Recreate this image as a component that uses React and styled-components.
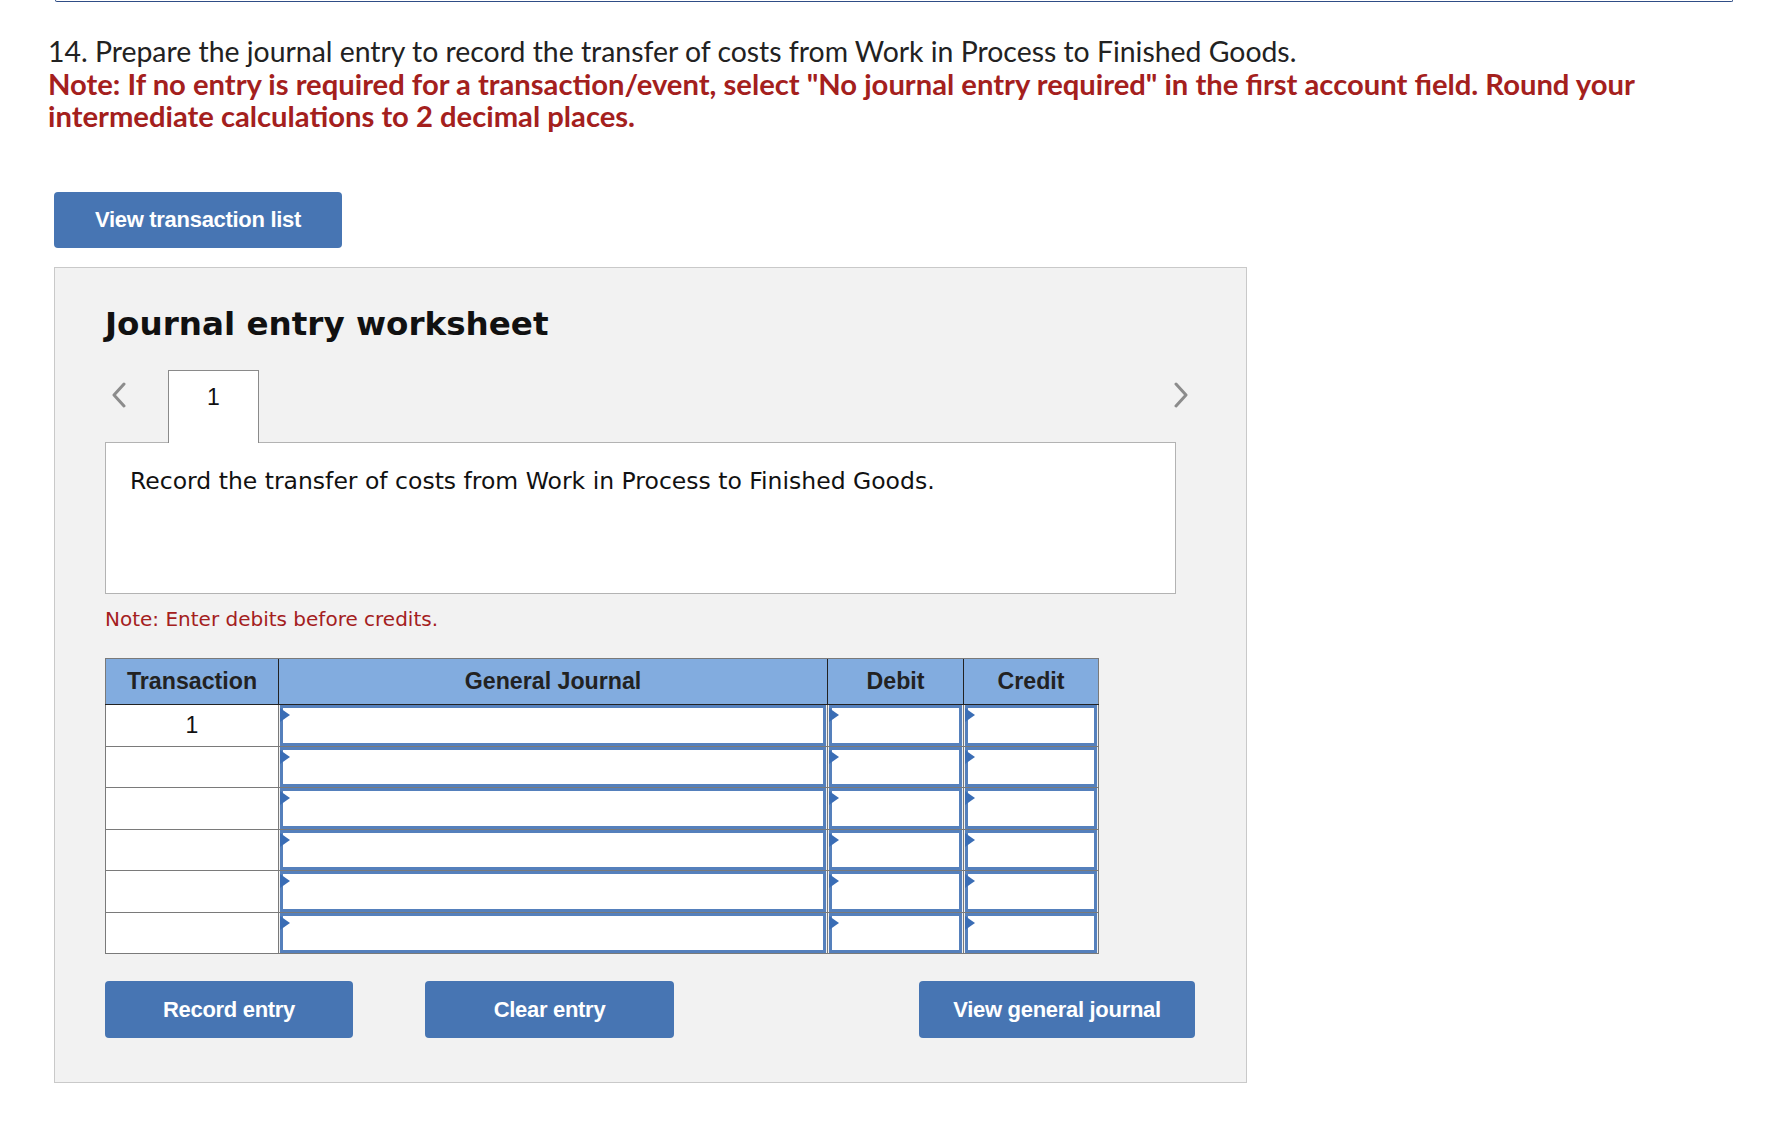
import React from "react";
import styled, { createGlobalStyle } from "styled-components";

const GlobalStyle = createGlobalStyle`
  html, body {
    margin: 0;
    padding: 0;
    background: #ffffff;
  }
`;

const Page = styled.div`
  width: 1790px;
  min-height: 1134px;
  background: #fff;
`;

const TopEdge = styled.div`
  margin: 0 57px 0 55px;
  height: 1px;
  border: 1px solid #2f4d86;
  border-top: none;
  border-radius: 0 0 4px 4px;
`;

const Question = styled.div`
  margin: 33px 0 0 48px;
  width: 1690px;
  font-family: Lato, "Open Sans", sans-serif;
  font-size: 28.4px;
  line-height: 33px;
  color: #222;

  p {
    margin: 0;
  }
`;

const RedNote = styled.p`
  color: #a4201d;
  font-weight: 700;
  font-size: 29.2px;
  line-height: 32px;
`;

const BlueButton = styled.button`
  display: flex;
  align-items: center;
  justify-content: center;
  width: ${(p) => p.$w}px;
  height: ${(p) => p.$h || 57}px;
  border: none;
  border-radius: 4px;
  background: #4775b3;
  color: #fff;
  font-family: "Liberation Sans", Arial, sans-serif;
  font-weight: 700;
  font-size: 22px;
  letter-spacing: -0.3px;
  cursor: pointer;
  padding: 0;
`;

const TopButtonWrap = styled.div`
  margin: 60px 0 0 54px;
`;

const Panel = styled.section`
  margin: 19px 0 0 54px;
  width: 1193px;
  box-sizing: border-box;
  background: #f2f2f2;
  border: 1px solid #c9c9c9;
  padding: 36px 51px 44px 50px;
  font-family: "DejaVu Sans", Verdana, sans-serif;
`;

const Title = styled.h2`
  margin: 0;
  font-size: 32.6px;
  line-height: 40px;
  font-weight: 700;
  color: #111;
`;

const TabRow = styled.div`
  margin-top: 26px;
  display: flex;
  align-items: flex-start;
  height: 72px;
`;

const Arrow = styled.button`
  display: flex;
  align-items: center;
  justify-content: center;
  width: 28px;
  height: 50px;
  border: none;
  background: none;
  padding: 0;
  margin: ${(p) => (p.$right ? "0 0 0 auto" : "0 35px 0 0")};
  cursor: pointer;
`;

const Tab = styled.div`
  position: relative;
  z-index: 1;
  align-self: stretch;
  width: 91px;
  box-sizing: border-box;
  margin-bottom: -1px;
  background: #fff;
  border: 1px solid #8a8a8a;
  border-bottom: none;
  display: flex;
  justify-content: center;
  padding-top: 13px;
  font-family: "Liberation Sans", Arial, sans-serif;
  font-size: 23px;
  color: #111;
`;

const DescBox = styled.div`
  width: 1071px;
  height: 152px;
  box-sizing: border-box;
  background: #fff;
  border: 1px solid #b3b3b3;
  padding: 23px 24px;
  font-size: 23.5px;
  line-height: 30px;
  color: #111;
`;

const EntryNote = styled.p`
  margin: 12px 0 0;
  font-size: 20px;
  line-height: 26px;
  color: #a4201d;
`;

const Table = styled.table`
  margin-top: 26px;
  border-collapse: collapse;
  table-layout: fixed;
  width: 989px;
  font-family: "Liberation Sans", Arial, sans-serif;
  border: 1px solid #7a7a7a;
`;

const Th = styled.th`
  width: ${(p) => p.$w}px;
  height: 45px;
  background: #82acdf;
  color: #222;
  font-size: 23.2px;
  font-weight: 700;
  border-top: 1px solid #7a7a7a;
  border-bottom: 1px solid #222;
  border-left: 1px solid #222;
  padding: 0;
  &:first-child {
    border-left: 1px solid #7a7a7a;
  }
`;

const Td = styled.td`
  height: 40.5px;
  padding: 0;
  border: 1px solid #7a7a7a;
  background: #fff;
  text-align: center;
  font-size: 23px;
  color: #111;
`;

const InputTd = styled.td`
  height: 40.5px;
  padding: 0;
  border: 1px solid #7a7a7a;
  background: #f2f2f2;
`;

const Field = styled.div`
  position: relative;
  height: 40.5px;
  box-sizing: border-box;
  margin: 0 1px;
  background: #fff;
  border: 3px solid #5580bc;
`;

const Marker = styled.span`
  position: absolute;
  top: 0;
  left: -3px;
  width: 0;
  height: 0;
  border-top: 7px solid transparent;
  border-bottom: 7px solid transparent;
  border-left: 10px solid #3a6db5;
`;

const ButtonRow = styled.div`
  margin-top: 27px;
  display: flex;
  gap: 72px;

  & > :last-child {
    margin-left: auto;
  }
`;

function Chevron({ right }) {
  return (
    <svg width="16" height="26" viewBox="0 0 16 26">
      <path
        d={right ? "M3 2 L13 13 L3 24" : "M13 2 L3 13 L13 24"}
        fill="none"
        stroke="#8c8c8c"
        strokeWidth="3"
        strokeLinecap="round"
        strokeLinejoin="round"
      />
    </svg>
  );
}

const rows = ["1", "", "", "", "", ""];

export default function App() {
  return (
    <Page>
      <GlobalStyle />
      <TopEdge />
      <Question>
        <p>14. Prepare the journal entry to record the transfer of costs from Work in Process to Finished Goods.</p>
        <RedNote>
          Note: If no entry is required for a transaction/event, select "No journal entry required" in the first account field. Round your intermediate calculations to 2 decimal places.
        </RedNote>
      </Question>

      <TopButtonWrap>
        <BlueButton $w={288} $h={56}>View transaction list</BlueButton>
      </TopButtonWrap>

      <Panel>
        <Title>Journal entry worksheet</Title>

        <TabRow>
          <Arrow aria-label="previous">
            <Chevron />
          </Arrow>
          <Tab>1</Tab>
          <Arrow $right aria-label="next">
            <Chevron right />
          </Arrow>
        </TabRow>

        <DescBox>Record the transfer of costs from Work in Process to Finished Goods.</DescBox>

        <EntryNote>Note: Enter debits before credits.</EntryNote>

        <Table>
          <thead>
            <tr>
              <Th $w={172}>Transaction</Th>
              <Th $w={548}>General Journal</Th>
              <Th $w={135}>Debit</Th>
              <Th $w={134}>Credit</Th>
            </tr>
          </thead>
          <tbody>
            {rows.map((t, i) => (
              <tr key={i}>
                <Td>{t}</Td>
                {[0, 1, 2].map((c) => (
                  <InputTd key={c}>
                    <Field>
                      <Marker />
                    </Field>
                  </InputTd>
                ))}
              </tr>
            ))}
          </tbody>
        </Table>

        <ButtonRow>
          <BlueButton $w={248}>Record entry</BlueButton>
          <BlueButton $w={249}>Clear entry</BlueButton>
          <BlueButton $w={276}>View general journal</BlueButton>
        </ButtonRow>
      </Panel>
    </Page>
  );
}
